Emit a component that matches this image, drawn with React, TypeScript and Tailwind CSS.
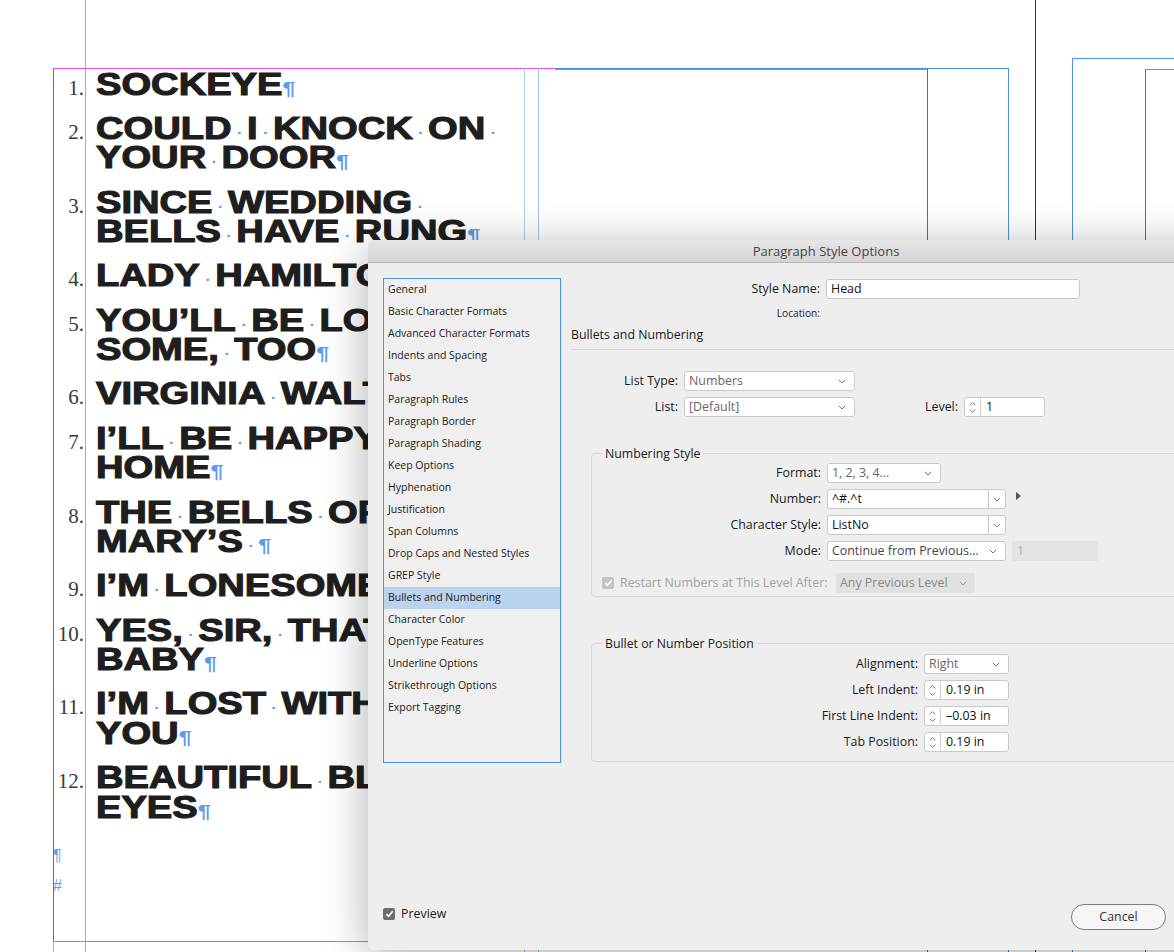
import React from "react";

const items: string[][] = [
  ["SOCKEYE"],
  ["COULD I KNOCK ON ", "YOUR DOOR"],
  ["SINCE WEDDING ", "BELLS HAVE RUNG"],
  ["LADY HAMILTON"],
  ["YOU’LL BE LONE-", "SOME, TOO"],
  ["VIRGINIA WALTZ"],
  ["I’LL BE HAPPY AT ", "HOME"],
  ["THE BELLS OF ST. ", "MARY’S "],
  ["I’M LONESOME"],
  ["YES, SIR, THAT’S MY ", "BABY"],
  ["I’M LOST WITHOUT ", "YOU"],
  ["BEAUTIFUL BLUE ", "EYES"],
];

const menu = [
  "General",
  "Basic Character Formats",
  "Advanced Character Formats",
  "Indents and Spacing",
  "Tabs",
  "Paragraph Rules",
  "Paragraph Border",
  "Paragraph Shading",
  "Keep Options",
  "Hyphenation",
  "Justification",
  "Span Columns",
  "Drop Caps and Nested Styles",
  "GREP Style",
  "Bullets and Numbering",
  "Character Color",
  "OpenType Features",
  "Underline Options",
  "Strikethrough Options",
  "Export Tagging",
];

function Dot() {
  return (
    <span className="inline-block w-[12.5px] text-center text-[20px] leading-[0] font-normal text-[#5b9bf0] relative -top-[1px]">·</span>
  );
}

function Line({ text, last }: { text: string; last: boolean }) {
  const parts = text.split(" ");
  return (
    <div className="origin-left scale-x-[1.23] whitespace-nowrap">
      {parts.map((w, i) => (
        <React.Fragment key={i}>
          {w && <span className="[-webkit-text-stroke:1.1px_#1e1e1e]">{w}</span>}
          {i < parts.length - 1 && <Dot />}
        </React.Fragment>
      ))}
      {last && <span className="text-[#5b9bf0] text-[19px] leading-[0] font-bold">¶</span>}
    </div>
  );
}

function Chev({ color = "#7a7a7a" }: { color?: string }) {
  return (
    <svg width="8" height="5" viewBox="0 0 8 5" className="shrink-0">
      <path d="M0.8 0.8 L4 4 L7.2 0.8" fill="none" stroke={color} strokeWidth="1" />
    </svg>
  );
}

function UpDown() {
  return (
    <svg width="7" height="13" viewBox="0 0 7 13">
      <path d="M0.8 4.4 L3.5 1.6 L6.2 4.4" fill="none" stroke="#777" strokeWidth="1" />
      <path d="M0.8 8.6 L3.5 11.4 L6.2 8.6" fill="none" stroke="#777" strokeWidth="1" />
    </svg>
  );
}

function Select({ width, text, textClass, bg }: { width: string; text: string; textClass: string; bg: string }) {
  return (
    <div className={`${width} ${bg} h-[20px] flex items-center justify-between pl-[4px] pr-[8px] border border-[#c9c9c9] rounded-[3px]`}>
      <span className={`${textClass} text-[12.4px] leading-none pt-[1px] whitespace-nowrap`}>{text}</span>
      <Chev />
    </div>
  );
}

function Combo({ text }: { text: string }) {
  return (
    <div className="w-[179px] h-[20px] flex border border-[#c9c9c9] rounded-[3px] bg-white">
      <div className="flex-1 flex items-center pl-[4px] pt-[1px] text-[12.4px] text-[#111]">{text}</div>
      <div className="w-[17px] flex items-center justify-center border-l border-[#c9c9c9]">
        <Chev />
      </div>
    </div>
  );
}

function Stepper({ width, value }: { width: string; value: string }) {
  return (
    <div className={`${width} h-[20px] flex border border-[#c9c9c9] rounded-[3px] bg-white`}>
      <div className="w-[16px] flex items-center justify-center border-r border-[#d2d2d2]">
        <UpDown />
      </div>
      <div className="flex items-center pl-[5px] pt-[1px] text-[12.4px] text-[#111]">{value}</div>
    </div>
  );
}

function Check({ bg }: { bg: string }) {
  return (
    <div className={`${bg} w-[12px] h-[12px] rounded-[2px] flex items-center justify-center`}>
      <svg width="9" height="8" viewBox="0 0 9 8">
        <path d="M1.3 4.2 L3.5 6.3 L7.7 1.3" fill="none" stroke="#fff" strokeWidth="1.6" />
      </svg>
    </div>
  );
}

function NumLabel({ children }: { children: React.ReactNode }) {
  return <div className="w-[229px] pt-[1px] text-right text-[12.4px] whitespace-nowrap text-[#1a1a1a]">{children}</div>;
}

function PosLabel({ children }: { children: React.ReactNode }) {
  return <div className="w-[326px] pt-[1px] text-right text-[12.4px] whitespace-nowrap text-[#1a1a1a]">{children}</div>;
}

export default function App() {
  return (
    <div className="relative w-[1174px] h-[952px] overflow-hidden bg-white">
      {/* Canvas guides */}
      <div className="absolute left-[85px] top-0 w-px h-[952px] bg-[#22e5ee]" />
      <div className="absolute left-[53px] top-[68px] w-px h-[873px] bg-[#9b3cf0]" />
      <div className="absolute left-[53px] top-[941px] w-px h-[11px] bg-[#8fb8f0]" />
      <div className="absolute left-[53px] top-[68px] w-[502px] h-px bg-[#f24cf2]" />
      <div className="absolute left-[555px] top-[68px] w-[453px] h-px bg-[#4a90f0]" />
      <div className="absolute left-[555px] top-[69px] w-[372px] h-px bg-[#f24cf2]" />
      <div className="absolute left-[524px] top-[68px] w-px h-[884px] bg-[#a9cbf5]" />
      <div className="absolute left-[538px] top-[68px] w-px h-[884px] bg-[#9ec3f5]" />
      <div className="absolute left-[927px] top-[69px] w-px h-[883px] bg-[#9b3cf0]" />
      <div className="absolute left-[1008px] top-[68px] w-px h-[884px] bg-[#4a90f0]" />
      <div className="absolute left-[1035px] top-0 w-px h-[952px] bg-[#333]" />
      <div className="absolute left-[1072px] top-[58px] w-[110px] h-[894px] border-l border-t border-[#4a90f0]" />
      <div className="absolute left-[1145px] top-[69px] w-[40px] h-[883px] border-l border-l-[#9b3cf0] border-t border-t-[#f24cf2]" />
      <div className="absolute left-[53px] top-[941px] w-[874px] h-px bg-[#e05ce0]" />

      {/* Story */}
      <div className="pl-[53px] pt-[69.5px]">
        {items.map((lines, i) => (
          <div key={i} className="flex items-baseline mb-[14.8px]">
            <div className="w-[31px] shrink-0 text-right font-['Liberation_Serif',serif] text-[21px] leading-[20px] text-[#3a3a3a]">
              {i + 1}.
            </div>
            <div className="ml-[12px] font-['Liberation_Sans',sans-serif] font-bold text-[31px] leading-[29.5px] text-[#1e1e1e]">
              {lines.map((l, j) => (
                <Line key={j} text={l} last={j === lines.length - 1} />
              ))}
            </div>
          </div>
        ))}
        <div className="pt-[4px] font-['Liberation_Sans',sans-serif] text-[16px] leading-[30px] text-[#5b9bf0]">
          <div>¶</div>
          <div>#</div>
        </div>
      </div>

      {/* Dialog */}
      <div className="absolute left-[368px] top-[240px] z-10 w-[916px] h-[710px] flex flex-col rounded-[6px] bg-[#eeeeee] shadow-[0_8px_45px_rgba(0,0,0,0.32)] font-['Open_Sans',sans-serif]">
        <div className="h-[23px] shrink-0 flex items-center justify-center pt-[2px] rounded-t-[6px] bg-gradient-to-b from-[#e6e6e6] to-[#d4d4d4] border-b border-[#b8b8b8] text-[13px] text-[#454545]">
          Paragraph Style Options
        </div>
        <div className="flex h-[631px]">
          {/* Left menu */}
          <div className="ml-[15px] mt-[15px] w-[178px] h-[485px] border border-[#4a8ee6] bg-[#efefef]">
            {menu.map((m) => (
              <div
                key={m}
                className={`h-[22px] flex items-center pl-[4px] text-[10.5px] text-[#1a1a1a] ${m === "Bullets and Numbering" ? "bg-[#bad3ee]" : ""}`}
              >
                {m}
              </div>
            ))}
          </div>

          {/* Right pane */}
          <div className="ml-[10px] flex-1 flex flex-col pr-[15px]">
            <div className="mt-[16px] flex items-center h-[20px]">
              <div className="w-[249px] pt-[1px] text-right text-[12.4px] text-[#1a1a1a]">Style Name:</div>
              <div className="ml-[6px] w-[254px] h-[20px] border border-[#c9c9c9] rounded-[3px] bg-white flex items-center pl-[4px] pt-[1px] text-[12.4px] text-[#111]">
                Head
              </div>
            </div>
            <div className="mt-[8px] flex items-center h-[14px]">
              <div className="w-[249px] text-right text-[10.2px] text-[#1a1a1a]">Location:</div>
            </div>
            <div className="mt-[6px] h-[16px] flex items-center text-[12.3px] text-[#1a1a1a]">Bullets and Numbering</div>
            <div className="mt-[6px] h-px bg-[#d6d6d6]" />

            <div className="mt-[21px] flex items-center h-[20px]">
              <div className="w-[107px] pt-[1px] text-right text-[12.4px] text-[#1a1a1a]">List Type:</div>
              <div className="ml-[6px]">
                <Select width="w-[171px]" text="Numbers" textClass="text-[#666]" bg="bg-white" />
              </div>
            </div>
            <div className="mt-[6px] flex items-center h-[20px]">
              <div className="w-[107px] pt-[1px] text-right text-[12.4px] text-[#1a1a1a]">List:</div>
              <div className="ml-[6px]">
                <Select width="w-[171px]" text="[Default]" textClass="text-[#666]" bg="bg-white" />
              </div>
              <div className="w-[103px] pt-[1px] text-right text-[12.4px] text-[#1a1a1a]">Level:</div>
              <div className="ml-[6px]">
                <Stepper width="w-[81px]" value="1" />
              </div>
            </div>

            {/* Numbering Style */}
            <div className="relative mt-[36px] ml-[20px] border border-[#d8d8d8] rounded-[4px] pt-[9px] pb-[3px]">
              <div className="absolute left-[10px] -top-[8px] px-[3px] bg-[#eeeeee] text-[12.3px] leading-[16px] text-[#1a1a1a]">
                Numbering Style
              </div>
              <div className="flex items-center h-[20px]">
                <NumLabel>Format:</NumLabel>
                <div className="ml-[6px]">
                  <Select width="w-[114px]" text="1, 2, 3, 4..." textClass="text-[#666]" bg="bg-white" />
                </div>
              </div>
              <div className="mt-[6px] flex items-center h-[20px]">
                <NumLabel>Number:</NumLabel>
                <div className="ml-[6px]">
                  <Combo text="^#.^t" />
                </div>
                <svg width="5" height="8" viewBox="0 0 5 8" className="ml-[10px] -mt-[6px]">
                  <path d="M0 0 L5 4 L0 8 Z" fill="#555" />
                </svg>
              </div>
              <div className="mt-[6px] flex items-center h-[20px]">
                <NumLabel>Character Style:</NumLabel>
                <div className="ml-[6px]">
                  <Combo text="ListNo" />
                </div>
              </div>
              <div className="mt-[6px] flex items-center h-[20px]">
                <NumLabel>Mode:</NumLabel>
                <div className="ml-[6px]">
                  <Select width="w-[179px]" text="Continue from Previous..." textClass="text-[#444]" bg="bg-white" />
                </div>
                <div className="ml-[6px] w-[86px] h-[20px] bg-[#e3e3e3] flex items-center pl-[5px] pt-[1px] text-[12.4px] text-[#aaa]">1</div>
              </div>
              <div className="mt-[12px] flex items-center h-[20px] pl-[10px]">
                <Check bg="bg-[#c4c4c4]" />
                <div className="ml-[6px] w-[210px] pt-[1px] whitespace-nowrap text-[12.4px] text-[#a3a3a3]">Restart Numbers at This Level After:</div>
                <div className="ml-[6px] w-[139px] h-[20px] bg-[#e1e1e1] rounded-[2px] flex items-center justify-between pl-[4px] pr-[8px]">
                  <span className="text-[12.4px] pt-[1px] text-[#888]">Any Previous Level</span>
                  <Chev color="#999" />
                </div>
              </div>
            </div>

            {/* Bullet or Number Position */}
            <div className="relative mt-[46px] ml-[20px] border border-[#d8d8d8] rounded-[4px] pt-[10px] pb-[9px]">
              <div className="absolute left-[10px] -top-[8px] px-[3px] bg-[#eeeeee] text-[12.3px] leading-[16px] text-[#1a1a1a]">
                Bullet or Number Position
              </div>
              <div className="flex items-center h-[20px]">
                <PosLabel>Alignment:</PosLabel>
                <div className="ml-[6px]">
                  <Select width="w-[85px]" text="Right" textClass="text-[#666]" bg="bg-white" />
                </div>
              </div>
              <div className="mt-[6px] flex items-center h-[20px]">
                <PosLabel>Left Indent:</PosLabel>
                <div className="ml-[6px]">
                  <Stepper width="w-[85px]" value="0.19 in" />
                </div>
              </div>
              <div className="mt-[6px] flex items-center h-[20px]">
                <PosLabel>First Line Indent:</PosLabel>
                <div className="ml-[6px]">
                  <Stepper width="w-[85px]" value="–0.03 in" />
                </div>
              </div>
              <div className="mt-[6px] flex items-center h-[20px]">
                <PosLabel>Tab Position:</PosLabel>
                <div className="ml-[6px]">
                  <Stepper width="w-[85px]" value="0.19 in" />
                </div>
              </div>
            </div>
          </div>
        </div>

        {/* Footer */}
        <div className="flex-1 flex items-start justify-between pl-[15px] pr-[118px]">
          <div className="mt-[14px] flex items-center h-[12px]">
            <Check bg="bg-[#6d6d6d]" />
            <span className="ml-[6px] pt-[1px] text-[12.4px] text-[#1a1a1a]">Preview</span>
          </div>
          <div className="mt-[10px] w-[95px] h-[26px] rounded-full border border-[#7d7d7d] bg-[#f6f6f6] flex items-center justify-center pt-[1px] text-[12.4px] text-[#333]">
            Cancel
          </div>
        </div>
      </div>
    </div>
  );
}
